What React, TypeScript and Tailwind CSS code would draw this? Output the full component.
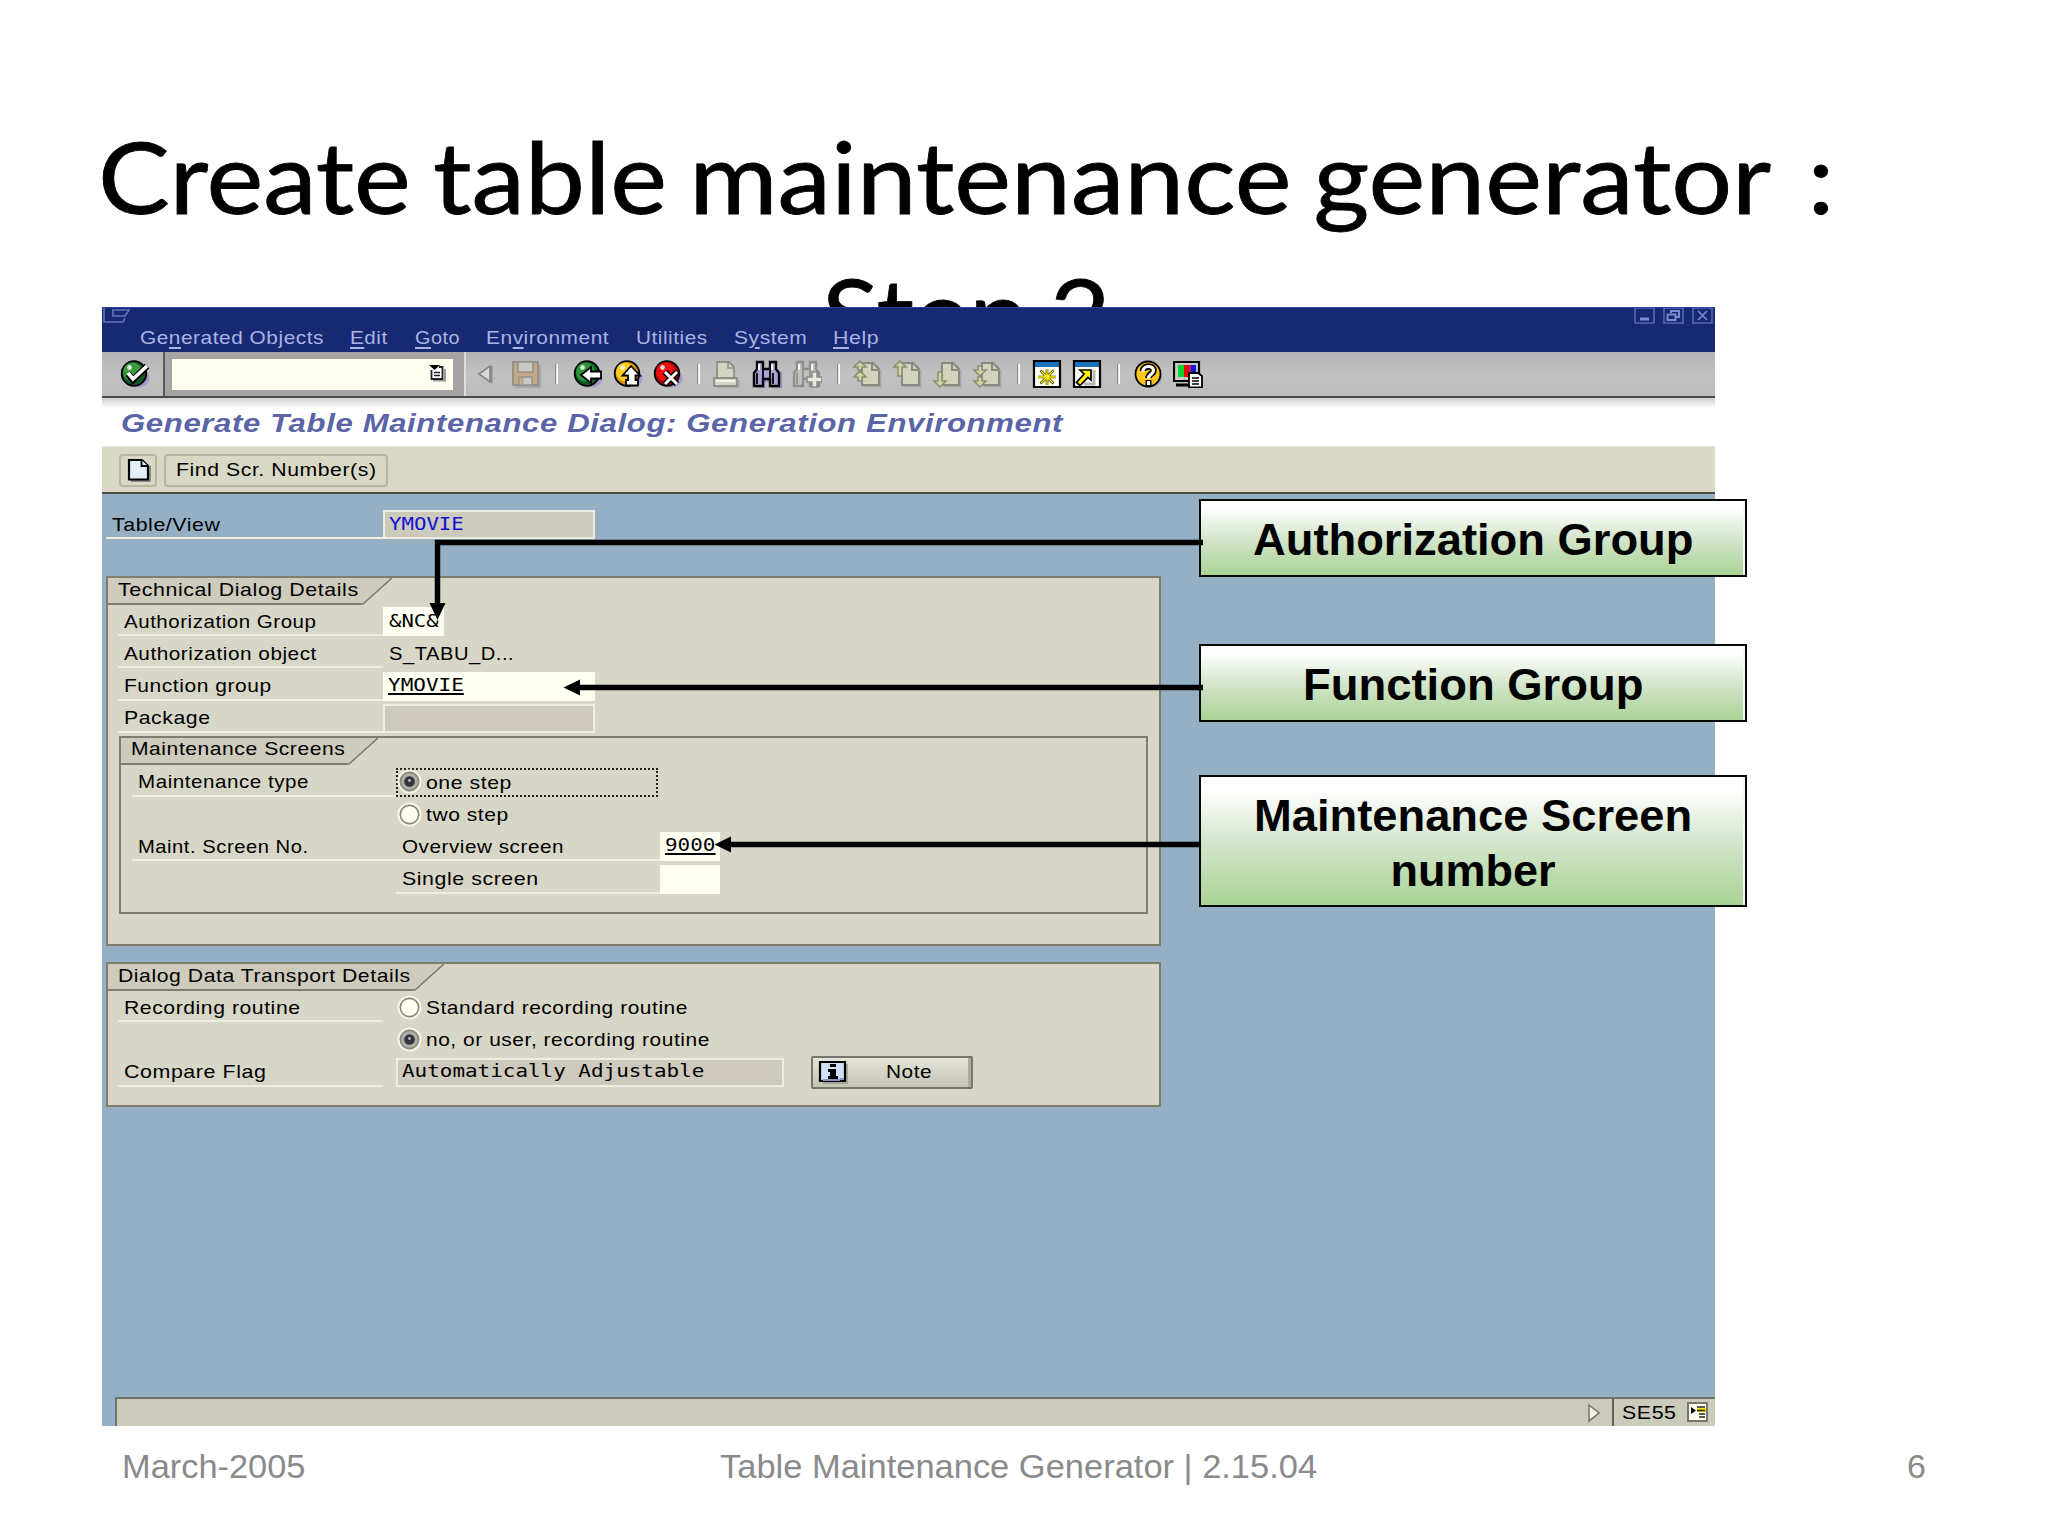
import { useLayoutEffect, useRef, useState } from "react";
import type { ReactNode } from "react";
import clsx from "clsx";

interface FitProps {
  w: number;
  children: ReactNode;
  className?: string;
}

// One line of text stretched sideways to a fixed width, like a scaled bitmap font.
function Fit({ w, children, className }: FitProps) {
  const ref = useRef<HTMLSpanElement>(null);
  const [scale, setScale] = useState(1);

  useLayoutEffect(() => {
    if (ref.current) setScale(w / ref.current.offsetWidth);
  }, [w]);

  return (
    <span className="inline-block shrink-0 text-left" style={{ width: w }}>
      <span
        ref={ref}
        className={clsx("inline-block origin-left whitespace-pre", className)}
        style={{ transform: `scaleX(${scale})` }}
      >
        {children}
      </span>
    </span>
  );
}

function Icon({ children, className = "w-[30px] h-7" }: { children: ReactNode; className?: string }) {
  return (
    <svg viewBox="0 0 30 28" className={clsx("shrink-0", className)}>
      {children}
    </svg>
  );
}

function Separator({ className = "ml-[15px]" }: { className?: string }) {
  return (
    <div
      className={clsx(
        "mr-3 h-[20px] w-[3px] shrink-0 border-l border-r border-l-[#8c8c8c] border-r-white bg-[#e6e6e6]",
        className
      )}
    />
  );
}

function Ball({ fill, dark }: { fill: string; dark: string }) {
  return (
    <>
      <ellipse cx="18" cy="18" rx="11.5" ry="9.5" fill="#a39bcb" />
      <circle cx="14" cy="13.5" r="12.3" fill={dark} stroke="#000" strokeWidth="1.8" />
      <circle cx="12.5" cy="12" r="9.5" fill={fill} />
      <circle cx="9.5" cy="7.5" r="2.4" fill="#fff" opacity="0.8" />
    </>
  );
}

const pageShape = "M10 3 H21 L27 9 V25 H10 Z";

function PageIcon({ arrows }: { arrows: string }) {
  return (
    <Icon>
      <path d="M12 26.5 H28.5 V10" fill="none" stroke="#a8a8a8" strokeWidth="2" />
      <path d={pageShape} fill="#d2d2bd" stroke="#888a82" strokeWidth="2" />
      <path d="M20 3 V10 H27" fill="none" stroke="#888a82" strokeWidth="2" />
      <path d={arrows} fill="#d4d4a0" stroke="#8e8f78" strokeWidth="1.6" />
    </Icon>
  );
}

function Binoculars({ fill, stroke, plus }: { fill: string; stroke: string; plus?: boolean }) {
  return (
    <Icon>
      {!plus && <path d="M5 27 H12 V21 H20 V27 H29 V12" fill="none" stroke="#9a90c4" strokeWidth="2.5" />}
      <path
        d="M5 2 H11 V9 H18 V2 H24 V9 L27 13 V26 H18 V19 H11 V26 H2 V13 L5 9 Z"
        fill={fill}
        stroke={stroke}
        strokeWidth="2.4"
      />
      <path d="M11 9 V19 M18 9 V19 M5 13 V24 M21 13 V24" stroke={stroke} strokeWidth="1.8" />
      <path d="M7 4 V10 M20 4 V10" stroke="#fff" strokeWidth="1.8" />
      {plus && <path d="M20 12 H25 V17 H30 V22 H25 V27 H20 V22 H15 V17 H20 Z" fill="#e8e8dc" stroke="#8c8c8c" strokeWidth="1.6" />}
    </Icon>
  );
}

const menu = [
  { pre: "Ge", key: "n", post: "erated Objects", w: 184 },
  { pre: "", key: "E", post: "dit", w: 38 },
  { pre: "", key: "G", post: "oto", w: 45 },
  { pre: "En", key: "v", post: "ironment", w: 123 },
  { pre: "Utilities", key: "", post: "", w: 72 },
  { pre: "S", key: "y", post: "stem", w: 73 },
  { pre: "", key: "H", post: "elp", w: 46 },
];

function MenuBar() {
  return (
    <div className="h-[45px] bg-[#182974] flex flex-col border-t border-[#2f43a0] text-[#a9b4e4]">
      <div className="h-[17px] flex justify-between pr-[2px]">
        <svg viewBox="0 0 30 17" className="w-[30px] h-[17px]" fill="none" stroke="#6573bd" strokeWidth="1.6">
          <path d="M2 0 V14 H21 L23 10 M10 2 H27 L23 8 H11 V2" />
        </svg>
        <div className="flex gap-[8px]">
          <svg viewBox="0 0 21 17" className="w-[21px] h-[17px]" fill="none" stroke="#5566b4" strokeWidth="1.6">
            <path d="M1 0 H20 V15 H1 Z" />
            <path d="M6 11 H15" stroke="#7d8bd0" strokeWidth="3" />
          </svg>
          <svg viewBox="0 0 21 17" className="w-[21px] h-[17px]" fill="none" stroke="#5566b4" strokeWidth="1.6">
            <path d="M1 0 H20 V15 H1 Z" />
            <path d="M8 5 V3 H16 V9 H13 M4.500 6.500 H12.500 V12 H4.500 Z" stroke="#7d8bd0" strokeWidth="2" />
          </svg>
          <svg viewBox="0 0 21 17" className="w-[21px] h-[17px]" fill="none" stroke="#5566b4" strokeWidth="1.6">
            <path d="M1 0 H20 V15 H1 Z" />
            <path d="M6 3 L15 12 M15 3 L6 12" stroke="#7d8bd0" />
          </svg>
        </div>
      </div>
      <div className="flex-1 flex items-center gap-[26.4px] pl-[38px] pb-px">
        {menu.map((m) => (
          <Fit key={m.pre + m.key + m.post} w={m.w} className="text-[19px] leading-6 tracking-[0.5px]">
            {m.pre}
            <span className="underline decoration-[1.5px] underline-offset-[3px]">{m.key}</span>
            {m.post}
          </Fit>
        ))}
      </div>
    </div>
  );
}

function Toolbar() {
  return (
    <div className="h-[46px] flex bg-gradient-to-b from-[#b2b3b5] via-[#c1c1c1] to-[#bcbcbc] border-b-2 border-[#4c4a4e]">
      <div className="w-[61px] flex items-center pl-[18px]">
        <Icon>
          <Ball fill="#3d9a3a" dark="#0c5a2c" />
          <path d="M8 14 L13 20 L27 6" fill="none" stroke="#000" strokeWidth="6.500" />
          <path d="M8 13 L13 19 L27 6" fill="none" stroke="#fff" strokeWidth="3.600" />
        </Icon>
      </div>
      <div className="w-[301px] flex items-center border-l-2 border-[#5b595b] bg-[#a5a3a4] pl-[7px]">
        <div className="w-[281px] h-[31px] bg-[#fffff0] flex items-center justify-end pr-[7px] pb-[2px]">
          <svg viewBox="0 0 18 18" className="w-[18px] h-[18px]">
            <path d="M5 16.500 H17 V5" fill="none" stroke="#999" strokeWidth="2" />
            <path d="M3.500 6 V15 H14.500 V3 H11" fill="#fff" stroke="#222" strokeWidth="1.800" />
            <path d="M1 1 H12 L6.500 6 Z" fill="#000" />
            <path d="M6 8.500 H12 M6 11.500 H12" stroke="#222" strokeWidth="1.600" />
          </svg>
        </div>
      </div>
      <div className="flex items-center border-l-2 border-[#dedede] pl-[10px]">
        <svg viewBox="0 0 18 22" className="w-[18px] h-[22px] mr-[17px]">
          <path d="M15.500 3 V20" stroke="#8a8a8a" strokeWidth="2" />
          <path d="M3 11 L14 3 V19 Z" fill="#d9d9d4" stroke="#858585" strokeWidth="1.600" />
        </svg>
        <Icon>
          <path d="M2 2 H27 V25 H2 Z" fill="#c3a883" stroke="#91908c" strokeWidth="1.800" />
          <path d="M7 2 H22 V12 H7 Z" fill="#c9cac6" stroke="#91908c" strokeWidth="1.500" />
          <path d="M8 17 H21 V25 H8 Z" fill="#c9cac6" stroke="#91908c" strokeWidth="1.500" />
          <path d="M11 18 V24" stroke="#c3a883" strokeWidth="3" />
          <path d="M4 27 H29 V5" fill="none" stroke="#a09fa5" strokeWidth="1.500" />
        </Icon>
        <Separator className="ml-[14px]" />
        <div className="flex gap-[10px] ml-[3px]">
          <Icon>
            <Ball fill="#2f9437" dark="#0c5a2c" />
            <path d="M8 15 L18 7 V11.500 H28 V18.500 H18 V23 Z" fill="#fff" stroke="#000" strokeWidth="1.800" />
          </Icon>
          <Icon>
            <Ball fill="#ffcb1f" dark="#d88c00" />
            <path d="M18 6 L27 15.500 H22.500 V20 H25 V25.500 H13 V20 H15 V15.500 H9.500 Z" fill="#fff" stroke="#000" strokeWidth="1.800" />
          </Icon>
          <Icon>
            <Ball fill="#e8100f" dark="#b00000" />
            <path d="M12 12 L24 24 M24 12 L12 24" stroke="#000" strokeWidth="6" />
            <path d="M12 12 L24 24 M24 12 L12 24" stroke="#fff" strokeWidth="3" />
          </Icon>
        </div>
        <Separator className="ml-[14px]" />
        <div className="flex gap-[10px]">
          <Icon>
            <path d="M5 28 H27 V20" fill="none" stroke="#aaa" strokeWidth="1.800" />
            <path d="M5 2 H17 L22 7 V18 H5 Z" fill="#d4d4c2" stroke="#8d8e88" strokeWidth="1.800" />
            <path d="M16 2 V8 H22" fill="none" stroke="#8d8e88" strokeWidth="1.500" />
            <path d="M2 18 H25 V26 H2 Z" fill="#d4d4c6" stroke="#8d8e88" strokeWidth="1.800" />
            <path d="M4 21 H23" stroke="#f4f4ea" strokeWidth="2" />
          </Icon>
          <Binoculars fill="#a9a3d6" stroke="#050505" />
          <Binoculars fill="#c2c2ba" stroke="#8f8f8f" plus />
        </div>
        <Separator />
        <div className="flex gap-[10px]">
          <PageIcon arrows="M8 1 L14 7 H10 V10 H6 V7 H2 Z M8 11 L14 17 H10 V21 H6 V17 H2 Z" />
          <PageIcon arrows="M8 1 L14 7 H10 V16 H6 V7 H2 Z" />
          <PageIcon arrows="M8 27 L14 21 H10 V12 H6 V21 H2 Z" />
          <PageIcon arrows="M8 16 L14 10 H10 V6 H6 V10 H2 Z M8 27 L14 21 H10 V17 H6 V21 H2 Z" />
        </div>
        <Separator />
        <div className="flex gap-[10px]">
          <Icon>
            <path d="M2 1 H28 V27 H2 Z" fill="#fffff4" stroke="#000" strokeWidth="2.200" />
            <path d="M3 4.500 H27" stroke="#1c6fb8" strokeWidth="5" />
            <path d="M15 9 V25 M6 17 H24 M8.500 10.500 L21.500 23.500 M21.500 10.500 L8.500 23.500" stroke="#3a3a00" strokeWidth="2.600" />
            <path d="M15 9 V25 M6 17 H24 M9 11 L21 23 M21 11 L9 23" stroke="#fff200" strokeWidth="1.300" />
            <path d="M12.500 14.500 H17.500 V19.500 H12.500 Z" fill="#fff200" />
          </Icon>
          <Icon>
            <path d="M2 1 H28 V27 H2 Z" fill="#fffff4" stroke="#000" strokeWidth="2.200" />
            <path d="M3 4.500 H27" stroke="#1c6fb8" strokeWidth="5" />
            <path d="M22 10 V24 H12" fill="none" stroke="#b8b8b8" strokeWidth="3" />
            <path d="M8 10 H19 V20 L16 17.500 L8 25.500 L4.500 22.500 L12 14 Z" fill="#ffee00" stroke="#000" strokeWidth="1.700" />
          </Icon>
        </div>
        <Separator />
        <div className="flex gap-[10px] ml-px">
          <Icon>
            <ellipse cx="17" cy="17" rx="12" ry="10.500" fill="#a39bcb" />
            <circle cx="15" cy="14" r="12.500" fill="#ffc61a" stroke="#000" strokeWidth="1.800" />
            <path d="M10 11 C10 5 20.500 5 20.500 10.500 C20.500 14 15.500 14 15.500 18" fill="none" stroke="#000" strokeWidth="6.500" />
            <path d="M15.500 20 V26" stroke="#000" strokeWidth="6" />
            <path d="M10 11.500 C10 5 20.500 5 20.500 10.500 C20.500 14 15.500 14 15.500 18.500 M15.500 21 V25" fill="none" stroke="#fff" strokeWidth="3.200" />
          </Icon>
          <Icon>
            <path d="M1 2 H26 V21 H1 Z" fill="#c9c9c9" stroke="#000" strokeWidth="2.200" />
            <path d="M5 5 H11 V17 H5 Z" fill="#00d62a" />
            <path d="M11 5 H17.500 V17 H11 Z" fill="#ed0000" />
            <path d="M17.500 5 H23 V17 H17.500 Z" fill="#1313dd" />
            <path d="M3 25 H16" stroke="#000" strokeWidth="3" />
            <path d="M16 13 H25 L29 16 V27.500 H16 Z" fill="#fff" stroke="#000" strokeWidth="1.800" />
            <path d="M19 18 H26 M19 21 H26 M19 24 H26" stroke="#000" strokeWidth="1.400" />
          </Icon>
        </div>
      </div>
    </div>
  );
}

function AppToolbar() {
  return (
    <div className="h-[48px] bg-[#d8d8c5] border-t border-t-[#e9e9e0] border-b-2 border-b-[#4c4e46] flex items-center gap-[7px] pl-[17px] pt-px">
      <div className="w-[38px] h-[33px] rounded-[4px] border-2 border-[#b9b6a0] flex items-center justify-center pl-px">
        <svg viewBox="0 0 24 24" className="w-6 h-6">
          <path d="M4 23 H23 V8" fill="none" stroke="#8c8c8c" strokeWidth="2" />
          <path d="M2 2 H15 L21 8 V21.500 H2 Z" fill="#e0effa" stroke="#000" strokeWidth="2.200" />
          <path d="M14.500 2 V8 H21" fill="#e0effa" stroke="#000" strokeWidth="1.800" />
        </svg>
      </div>
      <div className="w-[224px] h-[33px] rounded-[4px] border-2 border-[#b9b6a0] flex items-center pl-[10px]">
        <Fit w={200} className="text-[19px] leading-6 tracking-[0.5px]">Find Scr. Number(s)</Fit>
      </div>
    </div>
  );
}

interface GroupProps {
  title: string;
  w: number;
  tab: string;
  className: string;
  children: ReactNode;
}

function Group({ title, w, tab, className, children }: GroupProps) {
  return (
    <div className={clsx("border-2 border-[#7f7e6c] bg-[#d8d7c7]", className)}>
      <div className="flex h-[27px]">
        <div className={clsx("bg-[#cecbbd] border-b-2 border-[#7f7e6c] flex items-center pl-[10px]", tab)}>
          <Fit w={w} className="text-[19px] leading-[22px] tracking-[0.5px]">{title}</Fit>
        </div>
        <svg viewBox="0 0 31 27" className="w-[31px] h-[27px]">
          <path d="M0 0 H31 L2 26 H0 Z" fill="#cecbbd" />
          <path d="M0 26 H2 L31 0" fill="none" stroke="#7f7e6c" strokeWidth="1.600" />
        </svg>
      </div>
      {children}
    </div>
  );
}

function Row({ children }: { children: ReactNode }) {
  return <div className="flex h-[29px] mb-[3.2px]">{children}</div>;
}

function Label({ text, w, className = "w-[265px]" }: { text: string; w: number; className?: string }) {
  return (
    <div className={clsx("border-b-2 border-[#efeee0] pl-[5.5px] flex items-center pt-[3px]", className)}>
      <Fit w={w} className="text-[19px] leading-6 tracking-[0.5px]">{text}</Fit>
    </div>
  );
}

function Radio({ text, w, checked, className }: { text: string; w: number; checked?: boolean; className?: string }) {
  return (
    <div className={clsx("flex items-center gap-[4px]", className)}>
      <svg viewBox="0 0 26 26" className="w-[25px] h-[25px] shrink-0 -mt-px -ml-px">
        <circle cx="13" cy="13" r="11.500" fill="none" stroke="#f6f5ea" strokeWidth="2" />
        <circle cx="13" cy="13" r="9.500" fill={checked ? "#aeada6" : "#fffff4"} stroke="#8a887a" strokeWidth="1.600" />
        {checked && <circle cx="13" cy="13" r="5.500" fill="#34343c" />}
        {checked && <circle cx="13" cy="12" r="1.500" fill="#b8b8b8" />}
      </svg>
      <Fit w={w} className="text-[19px] leading-6 tracking-[0.5px] mt-[2px]">{text}</Fit>
    </div>
  );
}

const mono = "font-['DejaVu_Sans_Mono',monospace] text-[18.5px] leading-6";

function Form() {
  return (
    <div className="flex-1 flex flex-col bg-[#95b0c4] pt-[16px] pl-[4px]">
      <Row>
        <Label text="Table/View" w={109} className="w-[277px]" />
        <div className="w-[212px] border-2 border-[#eeede2] bg-[#cccabb] pl-[4px] flex items-center pb-px">
          <Fit w={75} className={clsx(mono, "text-[#1010d8]")}>YMOVIE</Fit>
        </div>
      </Row>

      <Group title="Technical Dialog Details" w={241} tab="w-[253px]" className="mt-[34px] w-[1055px] h-[370px]">
        <div className="pl-[10px] pt-[2px]">
          <Row>
            <Label text="Authorization Group" w={193} />
            <div className="w-[61px] bg-[#fffff2] pl-[6px] flex items-center pb-px">
              <Fit w={50} className={mono}>&NC&</Fit>
            </div>
          </Row>
          <Row>
            <Label text="Authorization object" w={193} />
            <div className="pl-[6px] flex items-center pt-px">
              <Fit w={125} className="text-[19px] leading-6 tracking-[0.5px]">S_TABU_D...</Fit>
            </div>
          </Row>
          <Row>
            <Label text="Function group" w={148} />
            <div className="w-[212px] bg-[#fffff2] pl-[5px] flex items-center pb-[2px]">
              <Fit w={76} className={clsx(mono, "underline decoration-2 underline-offset-2")}>YMOVIE</Fit>
            </div>
          </Row>
          <Row>
            <Label text="Package" w={86} />
            <div className="w-[212px] border-2 border-[#eeede2] bg-[#cdc9bc]" />
          </Row>
        </div>

        <Group title="Maintenance Screens" w={214} tab="w-[226px]" className="ml-[11px] mt-px w-[1029px] h-[178px]">
          <div className="pl-[11px] pt-[3px]">
            <Row>
              <Label text="Maintenance type" w={171} className="w-[264px]" />
              <Radio checked text="one step" w={86} className="w-[262px] border-2 border-dotted border-[#22221c] -mr-px" />
            </Row>
            <Row>
              <Radio text="two step" w={83} className="ml-[266px]" />
            </Row>
            <Row>
              <Label text="Maint. Screen No." w={171} className="w-[264px]" />
              <Label text="Overview screen" w={162} className="w-[264px]" />
              <div className="w-[60px] bg-[#fffff2] pl-[5px] flex items-center pb-[2px]">
                <Fit w={51} className={clsx(mono, "underline decoration-2 underline-offset-2")}>9000</Fit>
              </div>
            </Row>
            <Row>
              <Label text="Single screen" w={137} className="w-[264px] ml-[264px]" />
              <div className="w-[60px] bg-[#fffff2]" />
            </Row>
          </div>
        </Group>
      </Group>

      <Group title="Dialog Data Transport Details" w={293} tab="w-[305px]" className="mt-[16px] w-[1055px] h-[145px]">
        <div className="pl-[10px] pt-[2px]">
          <Row>
            <Label text="Recording routine" w={176} />
            <Radio text="Standard recording routine" w={262} className="ml-[15px]" />
          </Row>
          <Row>
            <Radio checked text="no, or user, recording routine" w={284} className="ml-[280px]" />
          </Row>
          <Row>
            <Label text="Compare Flag" w={142} />
            <div className="ml-[13px] w-[388px] border-2 border-[#eeede2] bg-[#cdc9bc] pl-[4px] flex items-center pb-[2px]">
              <Fit w={302} className={mono}>Automatically Adjustable</Fit>
            </div>
            <div className="ml-[27px] -mt-[2px] w-[162px] h-[33px] rounded-[2px] border-2 border-[#77766b] bg-gradient-to-b from-[#e6e4d8] to-[#c6c3b5] shadow-[inset_-3px_0_0_#aeab9e] flex items-center pl-[5px]">
              <svg viewBox="0 0 30 24" className="w-[30px] h-6 mr-[38px]">
                <path d="M4 23 H29 V4" fill="none" stroke="#a9a79b" strokeWidth="2" />
                <path d="M2 2 H27 V21 H2 Z" fill="#cfe0f5" stroke="#000" strokeWidth="2.200" />
                <path d="M5 20 H22 M22 19 H26" stroke="#8c92cc" strokeWidth="2" />
                <path d="M12 4 H18 V7 H12 Z M10 9 H18 V16 H20 V19 H10 V16 H12 V12 H10 Z" fill="#000" />
              </svg>
              <Fit w={46} className="text-[19px] leading-6 tracking-[0.5px]">Note</Fit>
            </div>
          </Row>
        </div>
      </Group>

      <div className="mt-auto ml-[9px] h-[29px] border-t-2 border-l-2 border-[#6f736a] bg-[#cccabb] flex items-center justify-end">
        <svg viewBox="0 0 16 20" className="w-4 h-5 mr-[10px]">
          <path d="M3 2 L13 10 L3 18 Z" fill="#f4f3ea" stroke="#77766b" strokeWidth="1.600" />
        </svg>
        <div className="w-[103px] h-full border-l-2 border-[#5f5e55] flex items-center pl-[8px] pt-px">
          <Fit w={54} className="text-[19px] leading-6 tracking-[0.5px]">SE55</Fit>
          <svg viewBox="0 0 22 20" className="w-[22px] h-5 ml-[11px] -mt-[2px]">
            <path d="M1 1 H20 V19 H1 Z" fill="#fffff4" stroke="#77766b" strokeWidth="2" />
            <path d="M4 5 V12 L9 8.500 Z" fill="#000" />
            <path d="M10 8 H19" stroke="#f2e600" strokeWidth="4" />
            <path d="M10 5 H18 M10 8.500 H18 M12 12 H18 M12 15 H18" stroke="#222" strokeWidth="1.500" />
          </svg>
        </div>
      </div>
    </div>
  );
}

function Callout({ className, children }: { className: string; children: ReactNode }) {
  return (
    <div
      className={clsx(
        "absolute left-[1199px] w-[548px] border-[2.5px] border-[#050a05] bg-gradient-to-b from-white from-10% via-[#d5e6cd] via-50% to-[#a9d394] shadow-[inset_-2px_0_0_#f4f8f2] flex flex-col items-center justify-center pt-[4px] font-bold text-[45px] leading-[55px]",
        className
      )}
    >
      {children}
    </div>
  );
}

function Arrows() {
  return (
    <svg viewBox="0 0 2048 1536" className="absolute inset-0 w-full h-full pointer-events-none">
      <path d="M1203 542.500 H437.500 V606 M1203 687.500 H578 M1200 844.500 H729" fill="none" stroke="#000" strokeWidth="5.500" />
      <path d="M429.500 603 H445.500 L437.500 620 Z M580 679.500 V695.500 L563.500 687.500 Z M731 836.500 V852.500 L714.500 844.500 Z" />
    </svg>
  );
}

export default function App() {
  return (
    <div className="relative w-[2048px] h-[1536px] overflow-hidden bg-white text-black font-['Liberation_Sans',Arial,sans-serif]">
      <h1 className="h-[307px] pt-[108px] ml-[98px] w-[1735px] flex flex-col items-center overflow-hidden font-['Lato',sans-serif] text-[98px] leading-[137px] [-webkit-text-stroke:0.8px_black] [word-spacing:-5px]">
        <Fit w={1736}>
          Create table maintenance generator<span className="[word-spacing:8px]"> :</span>
        </Fit>
        <Fit w={288}>Step 2</Fit>
      </h1>

      <div className="ml-[102px] w-[1613px] h-[1119px] flex flex-col">
        <MenuBar />
        <Toolbar />
        <div className="h-[48px] bg-gradient-to-b from-[#d0cfd2] from-0% to-white to-20% flex items-center pl-[19px] pt-px">
          <Fit w={942} className="font-bold italic text-[26px] leading-8 tracking-[0.5px] text-[#5b64a6]">
            Generate Table Maintenance Dialog: Generation Environment
          </Fit>
        </div>
        <AppToolbar />
        <Form />
      </div>

      <footer className="h-[82px] pl-[122px] pr-[122px] pb-px flex items-center text-[34px] text-[#8a8a8a]">
        <Fit w={183}>March-2005</Fit>
        <div className="ml-[415px]">
          <Fit w={597}>Table Maintenance Generator | 2.15.04</Fit>
        </div>
        <div className="ml-auto">
          <Fit w={19}>6</Fit>
        </div>
      </footer>

      <Callout className="top-[498.5px] h-[78px]">
        <Fit w={440}>Authorization Group</Fit>
      </Callout>
      <Callout className="top-[643.5px] h-[78px]">
        <Fit w={340}>Function Group</Fit>
      </Callout>
      <Callout className="top-[774.5px] h-[132px]">
        <Fit w={438}>Maintenance Screen</Fit>
        <Fit w={165}>number</Fit>
      </Callout>
      <Arrows />
    </div>
  );
}
